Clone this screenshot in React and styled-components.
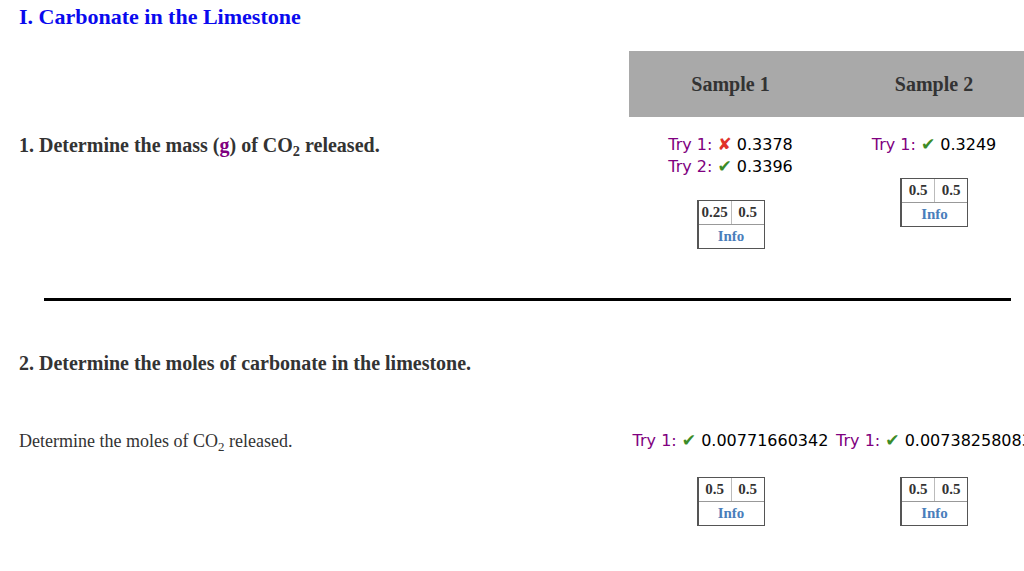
import React from "react";
import styled, { createGlobalStyle } from "styled-components";

const GlobalStyle = createGlobalStyle`
  html, body {
    margin: 0;
    padding: 0;
    background: #ffffff;
    overflow: hidden;
  }
  body {
    font-family: "Liberation Serif", "Times New Roman", serif;
    color: #333;
  }
  sub {
    font-size: 0.72em;
    line-height: 0;
    vertical-align: -0.28em;
  }
`;

const samples = ["Sample 1", "Sample 2"];

const rowOne = [
  {
    tries: [
      { n: 1, ok: false, value: "0.3378" },
      { n: 2, ok: true, value: "0.3396" },
    ],
    score: ["0.25", "0.5"],
  },
  {
    tries: [{ n: 1, ok: true, value: "0.3249" }],
    score: ["0.5", "0.5"],
  },
];

const rowTwo = [
  {
    tries: [{ n: 1, ok: true, value: "0.00771660342" }],
    score: ["0.5", "0.5"],
  },
  {
    tries: [{ n: 1, ok: true, value: "0.00738258083" }],
    score: ["0.5", "0.5"],
  },
];

const ScoreTable = ({ score }) => (
  <ScoreBox>
    <ScoreRow>
      <ScoreCell>{score[0]}</ScoreCell>
      <ScoreCell $last>{score[1]}</ScoreCell>
    </ScoreRow>
    <InfoLink href="#">Info</InfoLink>
  </ScoreBox>
);

const Answer = ({ data, $gap, $top }) => (
  <AnswerCell $top={$top}>
    {data.tries.map((t) => (
      <TryLine key={t.n}>
        <TryLabel>Try {t.n}:</TryLabel> <Mark $ok={t.ok}>{t.ok ? "\u2714" : "\u2718"}</Mark>{" "}
        {t.value}
      </TryLine>
    ))}
    <ScoreWrap $gap={$gap}>
      <ScoreTable score={data.score} />
    </ScoreWrap>
  </AnswerCell>
);

const App = () => {
  return (
    <Page>
      <GlobalStyle />
      <Title>I. Carbonate in the Limestone</Title>

      <Table>
        <HeadBlank />
        {samples.map((s) => (
          <HeadCell key={s}>{s}</HeadCell>
        ))}

        <Question $top={17}>
          1. Determine the mass (<Unit>g</Unit>) of CO<sub>2</sub> released.
        </Question>
        {rowOne.map((d, i) => (
          <Answer key={i} data={d} $gap={22} $top={17} />
        ))}

        <Divider />

        <SectionHeading>
          2. Determine the moles of carbonate in the limestone.
        </SectionHeading>

        <SubQuestion $top={56}>
          Determine the moles of CO<sub>2</sub> released.
        </SubQuestion>
        {rowTwo.map((d, i) => (
          <Answer key={i} data={d} $gap={25} $top={56} />
        ))}
      </Table>
    </Page>
  );
};

export default App;

const Page = styled.div`
  width: 1040px;
  padding: 5px 0 0 19px;
  box-sizing: border-box;
`;

const Title = styled.h1`
  margin: 0;
  font-size: 22px;
  line-height: 24px;
  font-weight: bold;
  color: #0a0aee;
`;

const Table = styled.div`
  display: grid;
  grid-template-columns: 610px 203px 204px;
  width: 1017px;
  margin-top: 22px;
`;

const HeadBlank = styled.div``;

const HeadCell = styled.div`
  display: flex;
  align-items: center;
  justify-content: center;
  height: 66px;
  background: #a9a9a9;
  font-size: 20px;
  font-weight: bold;
  color: #333;
`;

const Question = styled.div`
  padding-top: ${(p) => p.$top}px;
  font-size: 20px;
  line-height: 22px;
  font-weight: bold;
  color: #333;
`;

const Unit = styled.span`
  color: #800080;
`;

const AnswerCell = styled.div`
  display: flex;
  flex-direction: column;
  align-items: center;
  padding-top: ${(p) => p.$top}px;
  font-family: "DejaVu Sans", Verdana, sans-serif;
  font-size: 16px;
  line-height: 22px;
  color: #000;
  white-space: nowrap;
`;

const TryLine = styled.div``;

const TryLabel = styled.span`
  color: #800080;
`;

const Mark = styled.span`
  font-size: 17px;
  line-height: 0;
  color: ${(p) => (p.$ok ? "#3c8c28" : "#e0312b")};
`;

const ScoreWrap = styled.div`
  margin-top: ${(p) => p.$gap}px;
`;

const ScoreBox = styled.div`
  display: flex;
  flex-direction: column;
  width: 65px;
  border: 1px solid #555;
  border-left-width: 2px;
  font-family: "Liberation Serif", "Times New Roman", serif;
  font-size: 15px;
  font-weight: bold;
  line-height: 23px;
`;

const ScoreRow = styled.div`
  display: flex;
  border-bottom: 1px solid #999;
`;

const ScoreCell = styled.div`
  flex: 1;
  text-align: center;
  color: #333;
  border-right: ${(p) => (p.$last ? "none" : "1px solid #bbb")};
`;

const InfoLink = styled.a`
  display: block;
  text-align: center;
  color: #4a7ebb;
  text-decoration: none;
`;

const Divider = styled.div`
  grid-column: 1 / -1;
  width: 95%;
  justify-self: center;
  height: 3px;
  background: #000;
  margin: 49px 0 0 0;
`;

const SectionHeading = styled.div`
  grid-column: 1 / -1;
  margin-top: 51px;
  font-size: 20px;
  line-height: 22px;
  font-weight: bold;
  color: #333;
`;

const SubQuestion = styled.div`
  padding-top: ${(p) => p.$top}px;
  font-size: 18px;
  line-height: 22px;
  color: #333;
`;
